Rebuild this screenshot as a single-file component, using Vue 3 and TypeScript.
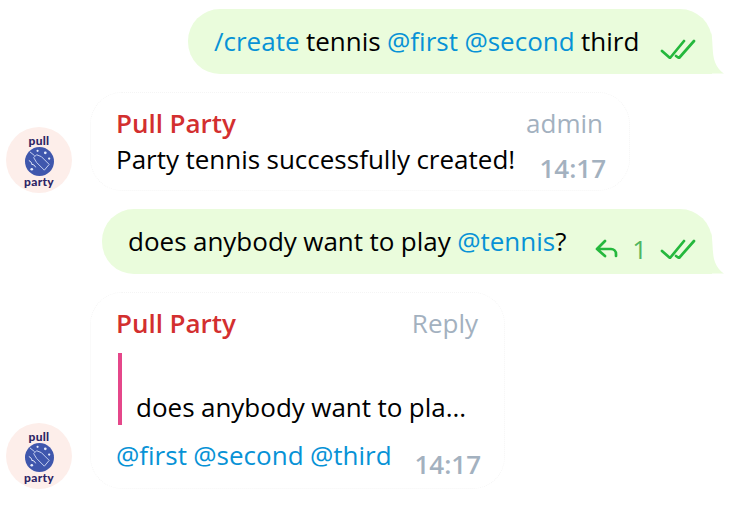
<script setup lang="ts">
const mentions = ['@first', '@second', '@third']
</script>

<template>
  <div class="chat">
    <div class="row out first">
      <div class="bubble sent">
        <span class="text"><span class="link">/create</span> tennis <span class="link">@first</span> <span class="link">@second</span> third</span>
        <div class="meta">
          <svg class="checks" width="36" height="20" viewBox="0 0 36 20" fill="none">
            <path d="M2 12l8 7L24 2M16 17l3 2L34 2" stroke="#25b83d" stroke-width="2.7" stroke-linecap="round" stroke-linejoin="round" />
          </svg>
        </div>
        <svg class="tail" width="14" height="42" viewBox="0 0 14 42"><path d="M0 0C2 8 1 18 3 27 5 34 8 38 13 41.5 H0Z" fill="#eafcdc" /></svg>
      </div>
    </div>

    <div class="row in one">
      <div class="avatar">
        <b>pull</b>
        <svg width="29" height="29" viewBox="0 0 30 30">
          <circle cx="15" cy="15" r="15" fill="#3f57ad" />
          <path d="M5 5l5 4M9 11l3-3 5 2 8 8-5 6-8-8Z" fill="none" stroke="#c9d3f3" stroke-width="1" />
          <circle cx="13" cy="4" r="1.1" fill="#e7ecfb" /><circle cx="21" cy="6" r="1.4" fill="#e7ecfb" />
          <circle cx="25" cy="12" r="1.2" fill="#e7ecfb" /><circle cx="7" cy="23" r="1.4" fill="#e7ecfb" />
          <path d="M4 14c2 1 3 2 3 4 2 0 3 1 4 3" fill="none" stroke="#e7ecfb" stroke-width="1" />
        </svg>
        <b>party</b>
      </div>
      <div class="bubble received plain">
        <div class="head"><span class="name">Pull Party</span><span class="role">admin</span></div>
        <div class="body">
          <span class="text">Party tennis successfully created!</span>
          <span class="time">14:17</span>
        </div>
      </div>
    </div>

    <div class="row out second">
      <div class="bubble sent">
        <span class="text">does anybody want to play <span class="link">@tennis</span>?</span>
        <div class="meta">
          <svg width="24" height="20" viewBox="0 0 24 20" fill="none">
            <path d="M10 2L2 10l8 7M2 10h14a5 5 0 0 1 5 5v2" stroke="#25b83d" stroke-width="2.7" stroke-linecap="round" stroke-linejoin="round" />
          </svg>
          <span class="count">1</span>
          <svg class="checks" width="36" height="20" viewBox="0 0 36 20" fill="none">
            <path d="M2 12l8 7L24 2M16 17l3 2L34 2" stroke="#25b83d" stroke-width="2.7" stroke-linecap="round" stroke-linejoin="round" />
          </svg>
        </div>
        <svg class="tail" width="14" height="42" viewBox="0 0 14 42"><path d="M0 0C2 8 1 18 3 27 5 34 8 38 13 41.5 H0Z" fill="#eafcdc" /></svg>
      </div>
    </div>

    <div class="row in two">
      <div class="avatar">
        <b>pull</b>
        <svg width="29" height="29" viewBox="0 0 30 30">
          <circle cx="15" cy="15" r="15" fill="#3f57ad" />
          <path d="M5 5l5 4M9 11l3-3 5 2 8 8-5 6-8-8Z" fill="none" stroke="#c9d3f3" stroke-width="1" />
          <circle cx="13" cy="4" r="1.1" fill="#e7ecfb" /><circle cx="21" cy="6" r="1.4" fill="#e7ecfb" />
          <circle cx="25" cy="12" r="1.2" fill="#e7ecfb" /><circle cx="7" cy="23" r="1.4" fill="#e7ecfb" />
          <path d="M4 14c2 1 3 2 3 4 2 0 3 1 4 3" fill="none" stroke="#e7ecfb" stroke-width="1" />
        </svg>
        <b>party</b>
      </div>
      <div class="bubble received">
        <div class="head"><span class="name">Pull Party</span><span class="role">Reply</span></div>
        <div class="quote"><span class="text">does anybody want to pla...</span></div>
        <div class="body">
          <span class="text"><template v-for="(m, i) in mentions" :key="m"><span class="link">{{ m }}</span>{{ i < 2 ? ' ' : '' }}</template></span>
          <span class="time">14:17</span>
        </div>
      </div>
    </div>
  </div>
</template>

<style>
html, body { background: #fff; overflow: hidden; }
</style>

<style scoped>
.chat {
  width: 733px;
  height: 505px;
  padding-top: 9px;
  box-sizing: border-box;
  font-family: "Open Sans", "Noto Sans", sans-serif;
  font-size: 26px;
  word-spacing: -0.35px;
  color: #000;
  overflow: hidden;
}
.row { display: flex; }
.out { justify-content: flex-end; padding-right: 21px; }
.in { align-items: flex-end; padding-left: 6px; }
.one { margin-top: 18px; }
.second { margin-top: 16px; }
.two { margin-top: 18px; }
.bubble { position: relative; box-sizing: border-box; }
.sent {
  display: flex;
  align-items: center;
  justify-content: space-between;
  height: 65px;
  background: #eafcdc;
  border-radius: 32px 32px 0 32px;
  padding: 0 16px 0 26px;
}
.sent .text { margin-bottom: 2px; }
.first .sent { width: 524px; }
.second .sent { width: 610px; }
.tail { position: absolute; right: -13px; bottom: 0; }
.link { color: #0792d6; }
.text { white-space: pre-wrap; line-height: 34px; }
.meta { display: flex; align-items: center; gap: 13px; margin-top: 14px; }
.count { line-height: 20px; color: #4fb560; font-weight: 500; }
.avatar {
  flex: none;
  box-sizing: border-box;
  width: 66px;
  height: 66px;
  padding-top: 8px;
  border-radius: 50%;
  background: #fdeeea;
  display: flex;
  flex-direction: column;
  align-items: center;
  color: #2d2465;
  font-family: "Lato", sans-serif;
  font-size: 12px;
  font-weight: 900;
  letter-spacing: 0.3px;
  line-height: 11px;
}
.avatar svg { display: block; margin-top: 1px; }
.received {
  margin-left: 18px;
  padding: 13px 26px 12px 25px;
  border: 1px dotted #f5f5f5;
  border-radius: 32px;
}
.one .received { width: 540px; height: 99px; margin-bottom: 2px; }
.two .received { width: 415px; height: 197px; }
.head { display: flex; justify-content: space-between; align-items: center; height: 34px; }
.name { color: #d32f2f; font-weight: 600; }
.role { color: #a3b1bf; }
.plain .body { margin-top: 2px; }
.body { display: flex; justify-content: space-between; align-items: flex-start; height: 34px; }
.time { color: #a3b1bf; font-weight: 600; line-height: 34px; margin-top: 9px; margin-right: -3px; }
.quote {
  display: flex;
  align-items: flex-end;
  height: 72px;
  margin: 13px 0 13px 2px;
  padding-left: 14px;
  border-left: 4px solid #e5478a;
}
.quote .text { margin-bottom: 1px; }
</style>
